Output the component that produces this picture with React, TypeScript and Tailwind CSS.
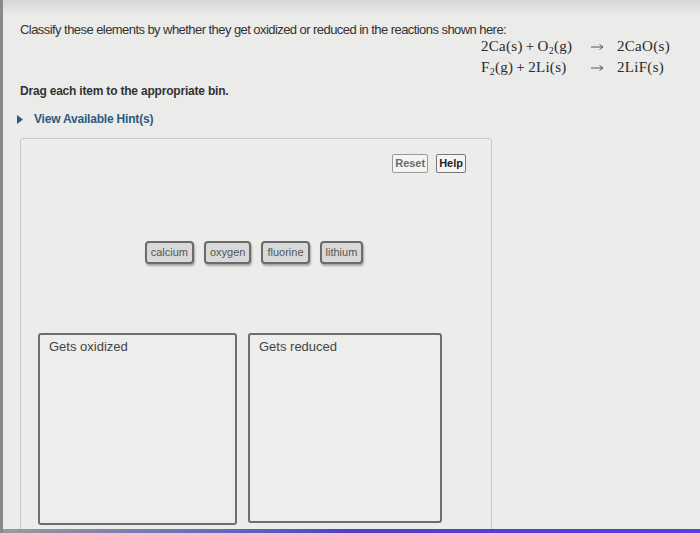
import React from "react";

const chips = ["calcium", "oxygen", "fluorine", "lithium"];

function Sub({ children }: { children: React.ReactNode }) {
  return <span className="relative top-[3px] text-[10px] leading-none">{children}</span>;
}

function Arrow() {
  return (
    <span className="flex items-center pl-[7px]">
      <svg width="13" height="8" viewBox="0 0 13 8">
        <path d="M0 4 H12 M8.5 1.5 L12 4 L8.5 6.5" stroke="#555" strokeWidth="1" fill="none" />
      </svg>
    </span>
  );
}

function Equations() {
  // two reactions, laid out in a small grid so arrows line up
  return (
    <div
      className="-mt-[2px] ml-[461px] grid grid-cols-[103px_33px_auto] text-[15px] leading-[21px] tracking-[0.3px] text-[#2a2a2a]"
      style={{ fontFamily: '"Liberation Serif", "DejaVu Serif", serif' }}
    >
      <span>
        2Ca(s)<span className="mx-[3px]">+</span>O<Sub>2</Sub>(g)
      </span>
      <Arrow />
      <span>2CaO(s)</span>
      <span>
        F<Sub>2</Sub>(g)<span className="mx-[3px]">+</span>2Li(s)
      </span>
      <Arrow />
      <span>2LiF(s)</span>
    </div>
  );
}

export default function App() {
  return (
    <div
      className="relative h-[533px] w-[700px] overflow-hidden border-l-[3px] border-[#8a8a8a] bg-[#ebebea]"
      style={{ fontFamily: '"Liberation Sans", Arial, sans-serif' }}
    >
      {/* darker band along the top of the photo */}
      <div className="absolute inset-x-0 top-0 h-[16px] bg-gradient-to-b from-[#d6d6d6] to-[#ebebea]" />

      <div className="relative pl-[17px] pt-[22px]">
        <p className="text-[13px] leading-[16px] tracking-[-0.56px] text-[#333]">
          Classify these elements by whether they get oxidized or reduced in the reactions shown here:
        </p>

        <Equations />

        <p className="mt-[5px] text-[12px] font-bold leading-[16px] tracking-[-0.2px] text-[#333]">
          Drag each item to the appropriate bin.
        </p>

        <div className="mt-[12px] flex items-center gap-[11px] text-[12px] font-bold leading-[16px] tracking-[-0.2px] text-[#2c5a80]">
          <svg width="6" height="9" viewBox="0 0 6 9" className="-ml-[3px]">
            <path d="M0 0 L6 4.5 L0 9 Z" fill="#2c5a80" />
          </svg>
          View Available Hint(s)
        </div>

        {/* drag & drop panel */}
        <div className="mt-[11px] h-[420px] w-[472px] rounded-[3px] border border-[#c9c9c9] bg-[#ececeb]">
          <div className="flex justify-end gap-[8px] pr-[25px] pt-[15px]">
            <button className="h-[19px] rounded-[2px] border border-[#9a9a9a] bg-[#f4f4f4] px-[2px] text-[11px] font-bold leading-[17px] text-[#6a6a6a]">
              Reset
            </button>
            <button className="h-[19px] rounded-[2px] border border-[#777] bg-[#f4f4f4] px-[2px] text-[11px] font-bold leading-[17px] text-[#222]">
              Help
            </button>
          </div>

          <div className="mt-[68px] flex justify-center gap-[10px] pr-[4px]">
            {chips.map((c) => (
              <span
                key={c}
                className="h-[23px] rounded-[4px] border-2 border-[#6b6b6b] bg-[#d9d9d9] px-[4px] text-[11px] leading-[19px] text-[#555] shadow-[1px_2px_2px_rgba(0,0,0,0.3)]"
              >
                {c}
              </span>
            ))}
          </div>

          <div className="mt-[69px] flex gap-[11px] pl-[17px]">
            <div className="h-[192px] w-[199px] rounded-[3px] border-2 border-[#6e6e6e] bg-[#ededec] px-[9px] pt-[4px] text-[13px] leading-[16px] text-[#444]">
              Gets oxidized
            </div>
            <div className="h-[190px] w-[194px] rounded-[3px] border-2 border-[#6e6e6e] bg-[#ededec] px-[9px] pt-[4px] text-[13px] leading-[16px] text-[#444]">
              Gets reduced
            </div>
          </div>
        </div>
      </div>

      {/* purple screen edge at the bottom */}
      <div className="absolute inset-x-0 bottom-0 h-[4px] bg-gradient-to-r from-[#9a9a9a] via-[#4d3fc9] to-[#5a3ee0]" />
    </div>
  );
}
